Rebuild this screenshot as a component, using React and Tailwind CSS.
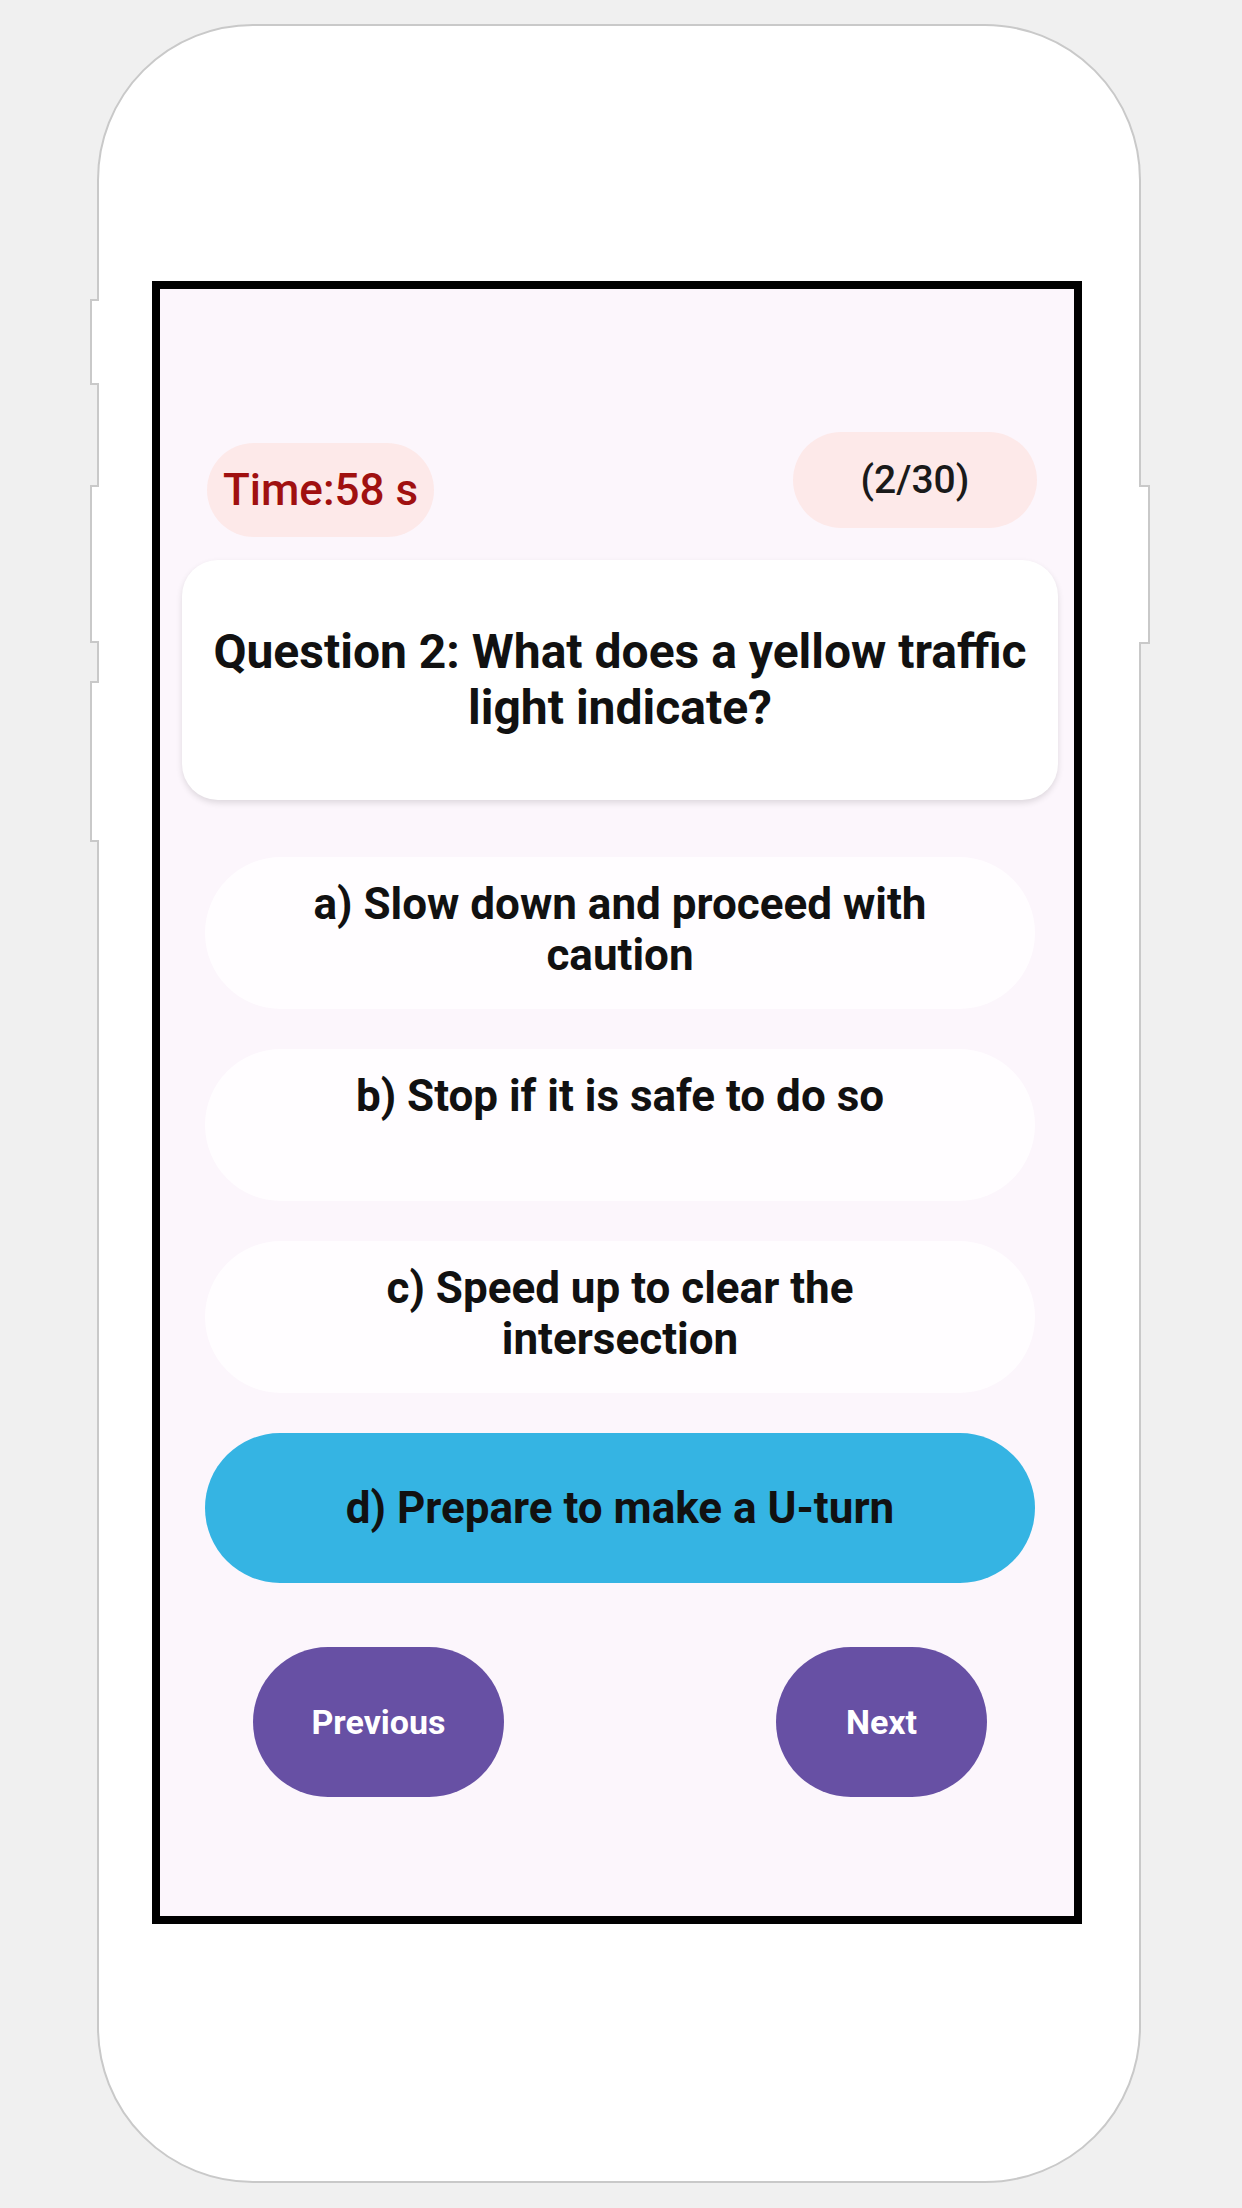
import React from 'react';

const options = [
  { label: 'a) Slow down and proceed with caution', selected: false },
  { label: 'b) Stop if it is safe to do so', selected: false },
  { label: 'c) Speed up to clear the intersection', selected: false },
  { label: 'd) Prepare to make a U-turn', selected: true },
];

const App = () => {
  return (
    <div className="w-full h-screen bg-[#f0f0f0] pt-[24px] pl-[97px] font-['Roboto','Liberation_Sans',sans-serif] overflow-hidden">
      {/* Phone body */}
      <div className="relative w-[1044px] h-[2159px] bg-white border-2 border-[#c9c9c9] rounded-[156px]">
        {/* Side buttons */}
        <div className="absolute left-[-9px] top-[273px] w-[9px] h-[86px] bg-white border-2 border-r-0 border-[#c9c9c9]" />
        <div className="absolute left-[-9px] top-[459px] w-[9px] h-[158px] bg-white border-2 border-r-0 border-[#c9c9c9]" />
        <div className="absolute left-[-9px] top-[655px] w-[9px] h-[161px] bg-white border-2 border-r-0 border-[#c9c9c9]" />
        <div className="absolute right-[-11px] top-[459px] w-[11px] h-[159px] bg-white border-2 border-l-0 border-[#c9c9c9]" />

        {/* Screen */}
        <div className="ml-[53px] mt-[255px] w-[930px] h-[1643px] border-[8px] border-black bg-[#fcf6fc] flex flex-col">
          {/* Top row */}
          <div className="flex items-start justify-between pt-[143px] pl-[47px] pr-[37px]">
            <div className="mt-[11px] h-[94px] px-[16px] rounded-full bg-[#fde9e9] flex items-center">
              <span className="text-[44px] font-medium text-[#a01010] leading-none">Time:58 s</span>
            </div>
            <div className="h-[96px] w-[244px] rounded-full bg-[#fde9e9] flex items-center justify-center">
              <span className="text-[39px] font-medium text-[#1a1a1a] leading-none">(2/30)</span>
            </div>
          </div>

          {/* Question card */}
          <div className="mt-[23px] ml-[22px] mr-[16px] h-[240px] rounded-[36px] bg-white shadow-[0_3px_6px_rgba(0,0,0,0.12)] flex items-center justify-center px-[16px]">
            <p className="text-center text-[48px] font-bold leading-[56px] text-[#111]">
              Question 2: What does a yellow traffic light indicate?
            </p>
          </div>

          {/* Options */}
          <div className="mt-[57px] ml-[45px] mr-[39px] flex flex-col gap-[40px]">
            {options.map((o) => (
              <div
                key={o.label}
                className={
                  o.selected
                    ? 'h-[150px] rounded-full bg-[#35b4e3] flex items-center justify-center px-[80px]'
                    : 'h-[152px] rounded-full bg-[#fffdff] flex justify-center pt-[22px] px-[90px]'
                }
              >
                <p className="text-center text-[44px] font-bold leading-[51px] text-[#111]">{o.label}</p>
              </div>
            ))}
          </div>

          {/* Nav buttons */}
          <div className="mt-[64px] flex justify-between pl-[93px] pr-[87px]">
            <button className="h-[150px] w-[251px] rounded-full bg-[#6750a4] text-white text-[34px] font-bold">
              Previous
            </button>
            <button className="h-[150px] w-[211px] rounded-full bg-[#6750a4] text-white text-[34px] font-bold">
              Next
            </button>
          </div>
        </div>
      </div>
    </div>
  );
};

export default App;
